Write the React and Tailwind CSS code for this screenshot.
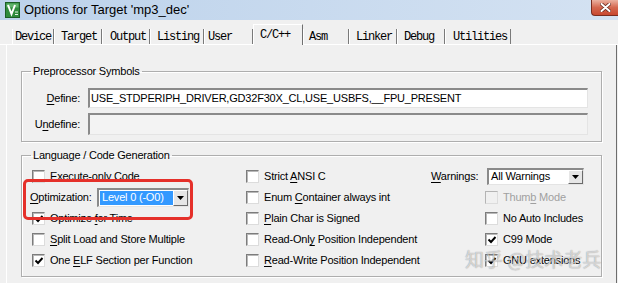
import React from 'react';

const tabs = [
  { name: 'Device', cls: 'w-[42px] pl-[2px]' },
  { name: 'Target', cls: 'w-[48px] pl-[6px]' },
  { name: 'Output', cls: 'w-[48px] pl-[7px]' },
  { name: 'Listing', cls: 'w-[54px] pl-[6px]' },
  { name: 'User', cls: 'w-[49px] pl-[3px]' },
  { name: 'C/C++', cls: 'w-[50px] pl-[6px]', active: true },
  { name: 'Asm', cls: 'w-[46px] pl-[5px]' },
  { name: 'Linker', cls: 'w-[48px] pl-[6px]' },
  { name: 'Debug', cls: 'w-[48px] pl-[6px]' },
  { name: 'Utilities', cls: 'w-[66px] pl-[7px]' },
];

const U = ({ children }) => <span className="underline underline-offset-[2px]">{children}</span>;

const Check = ({ checked, disabled }) => (
  <span
    className={
      'relative w-[13px] h-[13px] shrink-0 border border-t-[#7c7c7c] border-l-[#7c7c7c] border-r-[#dcdcdc] border-b-[#dcdcdc] ' +
      (disabled ? 'bg-[#f0f0f0] border-t-[#b4b4b4] border-l-[#b4b4b4]' : 'bg-white shadow-[inset_1px_1px_0_#b8b8b8]')
    }
  >
    {checked && (
      <svg className="absolute left-[1px] top-[1px]" width="10" height="10" viewBox="0 0 10 10">
        <path d="M1.5 4.5 L4 7 L8.5 2" fill="none" stroke="#000" strokeWidth="1.9" />
      </svg>
    )}
  </span>
);

const Box = ({ checked, disabled, children, cls = '' }) => (
  <div className={'flex items-center gap-[5px] ' + cls}>
    <Check checked={checked} disabled={disabled} />
    <span className={disabled ? 'text-[#a0a0a0]' : ''}>{children}</span>
  </div>
);

const Arrow = () => (
  <span className="w-[15px] h-full shrink-0 bg-[#e6e6e6] border border-t-white border-l-white border-r-[#6a6a6a] border-b-[#6a6a6a] flex items-center justify-center">
    <svg width="7" height="4" viewBox="0 0 7 4">
      <path d="M0 0 H7 L3.5 4 Z" fill="#000" />
    </svg>
  </span>
);

export default function App() {
  return (
    <div className="relative w-[618px] h-[283px] overflow-hidden bg-[#f0f0f0] flex flex-col font-['Liberation_Sans',Arial,sans-serif] text-[11px] tracking-[-0.2px] text-black">
      {/* title bar */}
      <div className="h-[20px] shrink-0 flex items-start bg-gradient-to-r from-[#bcd2eb] to-[#d4e2f2]">
        <svg className="ml-[5px] mt-[2px]" width="15" height="16" viewBox="0 0 15 16">
          <rect x="0.5" y="0.5" width="14" height="15" fill="#2f8b3c" stroke="#1b5e26" />
          <rect x="1.5" y="1.5" width="12" height="4" fill="#5fb26a" />
          <path d="M3 3 L6.5 12 L10 3" fill="none" stroke="#fff" strokeWidth="2" />
          <path d="M10 10 H13 M10 12.5 H13" stroke="#e8f5e9" strokeWidth="1" />
        </svg>
        <span className="ml-[4px] text-[13px] leading-[20px] tracking-normal">Options for Target 'mp3_dec'</span>
        <div className="ml-auto w-[27px] h-[16px] rounded-bl-[4px] border-l border-b border-[#7a2d20] bg-gradient-to-b from-[#eab0a0] via-[#d4674f] to-[#c9482f] flex items-center justify-center">
          <svg width="11" height="9" viewBox="0 0 11 9">
            <path d="M1.5 1 L9.5 8 M9.5 1 L1.5 8" stroke="#6b2a1f" strokeWidth="3.6" strokeLinecap="round" />
            <path d="M1.5 1 L9.5 8 M9.5 1 L1.5 8" stroke="#fff" strokeWidth="2" strokeLinecap="round" />
          </svg>
        </div>
      </div>

      {/* tabs */}
      <div className="h-[25px] shrink-0 flex items-end pl-[12px] border-b border-white font-['Liberation_Mono',monospace] text-[12px] tracking-[-1.2px]">
        {tabs.map((t) =>
          t.active ? (
            <div
              key={t.name}
              className={t.cls + ' h-[21px] -mb-px pt-[3px] leading-[14px] bg-[#f0f0f0] border-l border-t border-white border-r border-r-[#707070]'}
            >
              {t.name}
            </div>
          ) : (
            <div
              key={t.name}
              className={t.cls + ' h-[15px] leading-[16px] border-l border-l-white border-r border-r-[#7a7a7a]'}
            >
              {t.name}
            </div>
          )
        )}
      </div>

      {/* tab panel */}
      <div className="flex-1 ml-[6px] w-[611px] border-l border-l-white border-r border-r-[#6d6d6d] pl-[14px] pr-[14px] pt-[19px]">
        <fieldset className="border border-[#aeaeae] shadow-[inset_1px_1px_0_#fff,1px_1px_0_#fff]">
          <legend className="ml-[9px] px-[2px] leading-[14px]">Preprocessor Symbols</legend>
          <div className="pt-[10px] pb-[6px] pr-[13px] flex flex-col gap-[5px]">
            <div className="flex items-center h-[20px]">
              <span className="w-[58px] text-right">
                <U>D</U>efine:
              </span>
              <div className="ml-[8px] flex-1 h-full bg-white border-t-2 border-l-2 border-t-[#8a8a8a] border-l-[#8a8a8a] border-r border-b border-r-[#e4e4e4] border-b-[#e4e4e4] pl-[1px] leading-[16px]">
                USE_STDPERIPH_DRIVER,GD32F30X_CL,USE_USBFS,__FPU_PRESENT
              </div>
            </div>
            <div className="flex items-center h-[22px]">
              <span className="w-[58px] text-right">
                U<U>n</U>define:
              </span>
              <div className="ml-[8px] flex-1 h-full bg-[#f3f3f3] border-t-2 border-l-2 border-t-[#8a8a8a] border-l-[#8a8a8a] border-r border-b border-r-[#e4e4e4] border-b-[#e4e4e4]" />
            </div>
          </div>
        </fieldset>

        <fieldset className="mt-[6px] border border-[#aeaeae] shadow-[inset_1px_1px_0_#fff,1px_1px_0_#fff]">
          <legend className="ml-[9px] px-[2px] leading-[14px]">Language / Code Generation</legend>
          <div className="pt-[4px] pb-[5px] grid grid-cols-[224px_185px_1fr] auto-rows-[21px] items-center">
            <Box cls="pl-[10px]">Execute-only Code</Box>
            <Box>
              Strict <U>A</U>NSI C
            </Box>
            <div className="flex items-center">
              <span className="w-[56px]">
                <U>W</U>arnings:
              </span>
              <div className="w-[97px] h-[17px] flex bg-white border-t-2 border-l-2 border-t-[#8a8a8a] border-l-[#8a8a8a] border-r border-b border-r-[#e4e4e4] border-b-[#e4e4e4]">
                <span className="flex-1 pl-[2px] leading-[13px]">All Warnings</span>
                <Arrow />
              </div>
            </div>

            <div className="flex items-center pl-[8px]">
              <span className="w-[67px]">
                <U>O</U>ptimization:
              </span>
              <div className="w-[92px] h-[19px] flex bg-white border-t-2 border-l-2 border-t-[#8a8a8a] border-l-[#8a8a8a] border-r border-b border-r-[#e4e4e4] border-b-[#e4e4e4]">
                <span className="flex-1 ml-[1px] my-[1px] bg-[#3399ff] text-white pl-[2px] leading-[13px]">Level 0 (-O0)</span>
                <Arrow />
              </div>
            </div>
            <Box>
              Enum <U>C</U>ontainer always int
            </Box>
            <Box cls="pl-[54px]" disabled>
              Thum<U>b</U> Mode
            </Box>

            <Box cls="pl-[10px]" checked>
              Optimize <U>f</U>or Time
            </Box>
            <Box>
              <U>P</U>lain Char is Signed
            </Box>
            <Box cls="pl-[54px]">No Auto Includes</Box>

            <Box cls="pl-[10px]">
              <U>S</U>plit Load and Store Multiple
            </Box>
            <Box>
              Read-Onl<U>y</U> Position Independent
            </Box>
            <Box cls="pl-[54px]" checked>
              C99 Mode
            </Box>

            <Box cls="pl-[10px]" checked>
              One <U>E</U>LF Section per Function
            </Box>
            <Box>
              <U>R</U>ead-Write Position Independent
            </Box>
            <Box cls="pl-[54px]" checked>
              GNU extensions
            </Box>
          </div>
        </fieldset>
      </div>

      {/* red highlight drawn over the screenshot */}
      <div className="absolute left-[23px] top-[179px] w-[170px] h-[41px] border-[3px] border-[#e5302a] rounded-[5px]" />

      {/* watermark */}
      <div className="absolute left-[465px] top-[247px] text-[19px] leading-[24px] tracking-normal font-['Noto_Sans_CJK_SC',sans-serif] text-[rgba(255,255,255,0.6)] [text-shadow:0_0_1px_rgba(0,0,0,0.45)]">
        知乎 @技术老兵
      </div>
    </div>
  );
}
